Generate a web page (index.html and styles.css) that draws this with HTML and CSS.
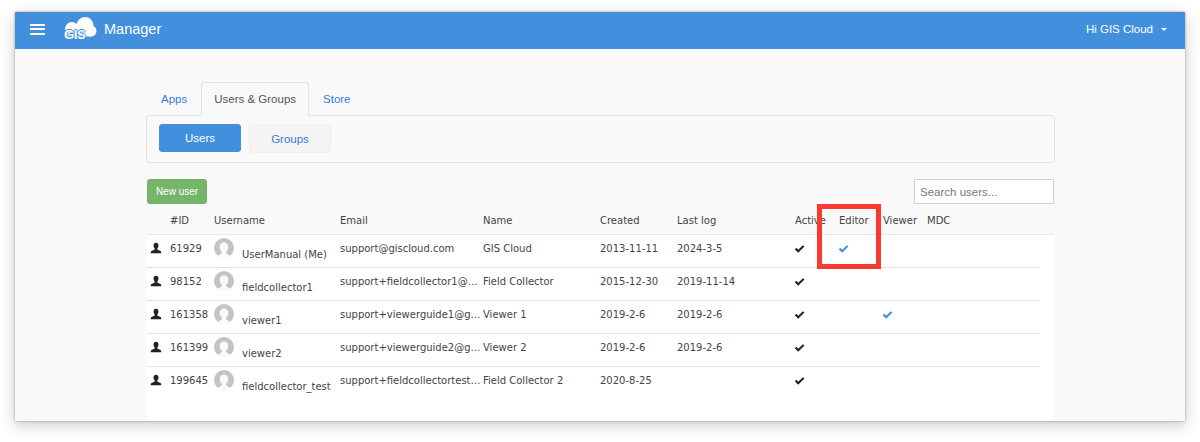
FILE: index.html
```html
<!DOCTYPE html>
<html lang="en">
<head>
<meta charset="utf-8">
<title>GIS Cloud Manager</title>
<link rel="stylesheet" href="styles.css">
</head>
<body>
<svg class="defs" width="0" height="0" aria-hidden="true">
  <symbol id="person" viewBox="0 0 12 12"><path d="M6 .8C4.4.8 3.500 2 3.500 3.600c0 1.200.5 2.300 1.200 2.900v1L1.600 8.900C.9 9.300.7 9.800.7 11.200h10.600c0-1.400-.2-1.900-.9-2.300L7.300 7.500v-1c.7-.6 1.200-1.700 1.200-2.900C8.500 2 7.600.8 6 .8z"/></symbol>
  <symbol id="check" viewBox="0 0 12 10"><path d="M.8 5.300 2.600 3.700l2 2L9.700.8l1.700 1.600-6.800 6.800z"/></symbol>
  <symbol id="avatar" viewBox="0 0 20 20"><circle cx="10" cy="10" r="10" fill="#c4c4c4"/><path fill="#fafafa" d="M10 4.500c-2.700 0-4.300 2-4.300 4.600 0 2.100 1 3.900 2.300 4.800v1L3.800 18a10 10 0 0 0 12.400 0L12 14.900v-1c1.300-.9 2.300-2.700 2.300-4.800 0-2.600-1.600-4.600-4.300-4.600z"/></symbol>
</svg>
<div class="window">
  <header class="topbar">
    <div class="brand">
      <span class="burger"><i></i><i></i><i></i></span>
      <span class="logo">
        <svg width="34" height="24" viewBox="0 0 34 24" fill="#fff"><circle cx="22" cy="8.500" r="8.500"/><circle cx="28" cy="14" r="5.500"/><circle cx="9" cy="12" r="7"/><rect x="4" y="11" width="24" height="8.500"/></svg>
        <b class="gis">GIS</b>
      </span>
      <span class="title">Manager</span>
    </div>
    <div class="greeting">Hi GIS Cloud <span class="caret"></span></div>
  </header>
  <main class="content">
    <nav class="tabs">
      <a class="tab">Apps</a>
      <a class="tab tab-active">Users &amp; Groups</a>
      <a class="tab">Store</a>
    </nav>
    <div class="subpanel">
      <a class="pill pill-active">Users</a>
      <a class="pill">Groups</a>
    </div>
    <div class="actions">
      <button class="new-user">New user</button>
      <input class="search" placeholder="Search users...">
    </div>
    <div class="table">
      <div class="row head">
        <div class="c-icon"></div><div class="c-id">#ID</div><div class="c-user">Username</div><div class="c-email">Email</div><div class="c-name">Name</div><div class="c-created">Created</div><div class="c-log">Last log</div><div class="c-flag">Active</div><div class="c-flag">Editor</div><div class="c-flag">Viewer</div><div class="c-flag">MDC</div>
      </div>
      <div class="row">
        <div class="c-icon"><svg class="i-person"><use href="#person"/></svg></div><div class="c-id">61929</div><div class="c-user"><svg class="i-avatar"><use href="#avatar"/></svg><span>UserManual (Me)</span></div><div class="c-email">support@giscloud.com</div><div class="c-name">GIS Cloud</div><div class="c-created">2013-11-11</div><div class="c-log">2024-3-5</div><div class="c-flag"><svg class="i-check"><use href="#check"/></svg></div><div class="c-flag"><svg class="i-check blue"><use href="#check"/></svg></div><div class="c-flag"></div><div class="c-flag"></div>
      </div>
      <div class="row">
        <div class="c-icon"><svg class="i-person"><use href="#person"/></svg></div><div class="c-id">98152</div><div class="c-user"><svg class="i-avatar"><use href="#avatar"/></svg><span>fieldcollector1</span></div><div class="c-email">support+fieldcollector1@gmail.com</div><div class="c-name">Field Collector</div><div class="c-created">2015-12-30</div><div class="c-log">2019-11-14</div><div class="c-flag"><svg class="i-check"><use href="#check"/></svg></div><div class="c-flag"></div><div class="c-flag"></div><div class="c-flag"></div>
      </div>
      <div class="row">
        <div class="c-icon"><svg class="i-person"><use href="#person"/></svg></div><div class="c-id">161358</div><div class="c-user"><svg class="i-avatar"><use href="#avatar"/></svg><span>viewer1</span></div><div class="c-email">support+viewerguide1@gmail.com</div><div class="c-name">Viewer 1</div><div class="c-created">2019-2-6</div><div class="c-log">2019-2-6</div><div class="c-flag"><svg class="i-check"><use href="#check"/></svg></div><div class="c-flag"></div><div class="c-flag"><svg class="i-check blue"><use href="#check"/></svg></div><div class="c-flag"></div>
      </div>
      <div class="row">
        <div class="c-icon"><svg class="i-person"><use href="#person"/></svg></div><div class="c-id">161399</div><div class="c-user"><svg class="i-avatar"><use href="#avatar"/></svg><span>viewer2</span></div><div class="c-email">support+viewerguide2@gmail.com</div><div class="c-name">Viewer 2</div><div class="c-created">2019-2-6</div><div class="c-log">2019-2-6</div><div class="c-flag"><svg class="i-check"><use href="#check"/></svg></div><div class="c-flag"></div><div class="c-flag"></div><div class="c-flag"></div>
      </div>
      <div class="row">
        <div class="c-icon"><svg class="i-person"><use href="#person"/></svg></div><div class="c-id">199645</div><div class="c-user"><svg class="i-avatar"><use href="#avatar"/></svg><span>fieldcollector_test</span></div><div class="c-email">support+fieldcollectortest@gmail.com</div><div class="c-name">Field Collector 2</div><div class="c-created">2020-8-25</div><div class="c-log"></div><div class="c-flag"><svg class="i-check"><use href="#check"/></svg></div><div class="c-flag"></div><div class="c-flag"></div><div class="c-flag"></div>
      </div>
    </div>
    <div class="highlight"></div>
  </main>
</div>
</body>
</html>
```
FILE: styles.css
```css
* { box-sizing: border-box; }
html, body { margin: 0; height: 100%; overflow: hidden; }
body { background: #fff; padding: 12px 15px 21px; font-family: "Liberation Sans", Arial, sans-serif; }
.defs { position: absolute; }
.window { height: 409px; background: #f9f9f9; box-shadow: 0 0 2px rgba(0,0,0,.35), 0 4px 14px rgba(0,0,0,.22); display: flex; flex-direction: column; overflow: hidden; }
.topbar { height: 37px; flex: none; background: #428fdd; color: #fff; display: flex; justify-content: space-between; align-items: center; padding: 0 18px 3px 15px; }
.brand { display: flex; align-items: center; }
.burger { width: 15px; display: flex; flex-direction: column; gap: 2.500px; margin-right: 18px; }
.burger i { display: block; height: 2px; background: #fff; }
.logo { position: relative; width: 34px; height: 24px; margin-right: 7px; display: block; }
.logo svg { display: block; }
.gis { position: absolute; left: 1px; top: 11px; font-size: 13px; line-height: 13px; font-weight: 700; color: #fff; letter-spacing: -.3px; text-shadow: 0 0 1px #428fdd, 1px 0 0 #428fdd, 0 -1px 0 #428fdd, -1px 0 0 #428fdd; }
.title { font-size: 14.500px; }
.greeting { font-size: 11.500px; display: flex; align-items: center; }
.caret { width: 0; height: 0; border: 3px solid transparent; border-top: 3px solid #fff; border-bottom: 0; margin-left: 8px; margin-top: 1px; }
.content { position: relative; flex: 1; padding: 33px 131px 0 132px; }
.tabs { display: flex; height: 34px; position: relative; z-index: 1; }
.tab { font-size: 11.500px; color: #3b78e0; padding: 0 14px; line-height: 34px; }
.tab-active { color: #555; background: #f9f9f9; border: 1px solid #e3e3e3; border-bottom-color: #f9f9f9; border-radius: 3px 3px 0 0; padding: 0 12px; height: 34px; line-height: 33px; }
.subpanel { height: 48px; margin: -1px -1px 0 -1px; border: 1px solid #e3e3e3; border-radius: 3px; padding: 8px 12px; display: flex; gap: 8px; align-items: flex-start; }
.pill { width: 82px; font-size: 11.500px; text-align: center; color: #3b78e0; background: #f4f4f4; border: 1px solid #f0f0f0; border-radius: 3px; line-height: 29px; height: 29px; }
.pill-active { background: #428fdd; color: #fff; border-color: #428fdd; height: 28px; line-height: 26px; }
.actions { display: flex; justify-content: space-between; align-items: flex-start; margin-top: 16px; height: 27px; }
.new-user { width: 60px; height: 25px; padding: 0; border: 1px solid #70b266; border-radius: 3px; background: #74b56a; color: #fff; font: 10px "Liberation Sans", Arial, sans-serif; }
.search { width: 140px; height: 25px; border: 1px solid #d2d2d2; background: #fff; padding: 0 5px; font: 11.500px "Liberation Sans", Arial, sans-serif; outline: none; border-radius: 0; }
.search::placeholder { color: #777; opacity: 1; }
.table { height: 216px; background: #fff; font-family: "DejaVu Sans", Verdana, sans-serif; font-size: 10px; color: #444; padding-right: 14px; }
.row { display: flex; height: 33px; border-bottom: 1px solid #e3e3e3; padding-top: 7px; line-height: 14px; }
.row.head { height: 29px; background: #f9f9f9; margin-right: -14px; padding-top: 8px; border-bottom: 0; box-shadow: inset 0 -1px 0 #e8e8e8; }
.row:last-child { border-bottom: 0; }
.c-icon { width: 23px; padding: 0 0 0 3px; }
.c-id { width: 44px; }
.c-user { width: 126px; display: flex; }
.c-user span { margin: 6px 0 0 8px; white-space: nowrap; }
.c-email { width: 143px; padding-right: 1px; white-space: nowrap; overflow: hidden; text-overflow: ellipsis; }
.c-name { width: 117px; white-space: nowrap; }
.c-created { width: 77px; }
.c-log { width: 118px; }
.c-flag { width: 44px; white-space: nowrap; }
.i-person { width: 12px; height: 12px; fill: #222; display: block; }
.i-avatar { width: 20px; height: 20px; flex: none; margin-top: -4px; }
.i-check { width: 11px; height: 10px; fill: #222; display: block; margin: 1.500px 0 0 -1px; }
.i-check.blue { fill: #428fdd; }
.highlight { position: absolute; left: 802px; top: 155px; width: 64px; height: 65px; border: 5px solid #f93a30; pointer-events: none; }
```
